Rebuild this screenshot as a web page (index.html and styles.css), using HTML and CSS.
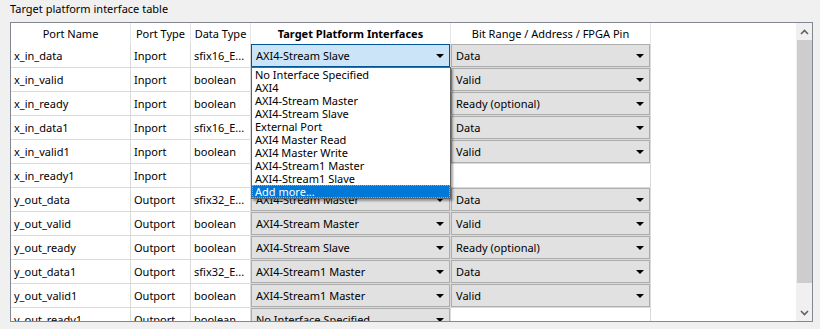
FILE: index.html
```html
<!DOCTYPE html>
<html lang="en">
<head>
    <meta charset="UTF-8">
    <title>Target platform interface table</title>
    <link rel="stylesheet" href="styles.css">
</head>
<body>
    <div class="panel">
        <div class="title">Target platform interface table</div>

        <div class="table-box">
            <div class="grid">
                <!-- Header -->
                <div class="row header">
                    <div class="cell">Port Name</div>
                    <div class="cell">Port Type</div>
                    <div class="cell">Data Type</div>
                    <div class="cell bold">Target Platform Interfaces</div>
                    <div class="cell">Bit Range / Address / FPGA Pin</div>
                    <div class="cell blank"></div>
                </div>

                <div class="row">
                    <div class="cell">x_in_data</div>
                    <div class="cell">Inport</div>
                    <div class="cell">sfix16_E...</div>
                    <div class="cell combo-cell open">
                        <div class="combo focused">AXI4-Stream Slave</div>
                        <ul class="dropdown">
                            <li>No Interface Specified</li>
                            <li>AXI4</li>
                            <li>AXI4-Stream Master</li>
                            <li>AXI4-Stream Slave</li>
                            <li>External Port</li>
                            <li>AXI4 Master Read</li>
                            <li>AXI4 Master Write</li>
                            <li>AXI4-Stream1 Master</li>
                            <li>AXI4-Stream1 Slave</li>
                            <li class="selected">Add more...</li>
                        </ul>
                    </div>
                    <div class="cell combo-cell"><div class="combo">Data</div></div>
                    <div class="cell blank"></div>
                </div>

                <!-- rows under the open list: their interface combos are hidden -->
                <div class="row">
                    <div class="cell">x_in_valid</div>
                    <div class="cell">Inport</div>
                    <div class="cell">boolean</div>
                    <div class="cell combo-cell"><div class="combo"></div></div>
                    <div class="cell combo-cell"><div class="combo">Valid</div></div>
                    <div class="cell blank"></div>
                </div>

                <div class="row">
                    <div class="cell">x_in_ready</div>
                    <div class="cell">Inport</div>
                    <div class="cell">boolean</div>
                    <div class="cell combo-cell"><div class="combo"></div></div>
                    <div class="cell combo-cell"><div class="combo">Ready (optional)</div></div>
                    <div class="cell blank"></div>
                </div>

                <div class="row">
                    <div class="cell">x_in_data1</div>
                    <div class="cell">Inport</div>
                    <div class="cell">sfix16_E...</div>
                    <div class="cell combo-cell"><div class="combo"></div></div>
                    <div class="cell combo-cell"><div class="combo">Data</div></div>
                    <div class="cell blank"></div>
                </div>

                <div class="row">
                    <div class="cell">x_in_valid1</div>
                    <div class="cell">Inport</div>
                    <div class="cell">boolean</div>
                    <div class="cell combo-cell"><div class="combo"></div></div>
                    <div class="cell combo-cell"><div class="combo">Valid</div></div>
                    <div class="cell blank"></div>
                </div>

                <div class="row">
                    <div class="cell">x_in_ready1</div>
                    <div class="cell">Inport</div>
                    <div class="cell"></div>
                    <div class="cell combo-cell"><div class="combo"></div></div>
                    <div class="cell"></div>
                    <div class="cell blank"></div>
                </div>

                <div class="row">
                    <div class="cell">y_out_data</div>
                    <div class="cell">Outport</div>
                    <div class="cell">sfix32_E...</div>
                    <div class="cell combo-cell"><div class="combo">AXI4-Stream Master</div></div>
                    <div class="cell combo-cell"><div class="combo">Data</div></div>
                    <div class="cell blank"></div>
                </div>

                <div class="row">
                    <div class="cell">y_out_valid</div>
                    <div class="cell">Outport</div>
                    <div class="cell">boolean</div>
                    <div class="cell combo-cell"><div class="combo">AXI4-Stream Master</div></div>
                    <div class="cell combo-cell"><div class="combo">Valid</div></div>
                    <div class="cell blank"></div>
                </div>

                <div class="row">
                    <div class="cell">y_out_ready</div>
                    <div class="cell">Outport</div>
                    <div class="cell">boolean</div>
                    <div class="cell combo-cell"><div class="combo">AXI4-Stream Slave</div></div>
                    <div class="cell combo-cell"><div class="combo">Ready (optional)</div></div>
                    <div class="cell blank"></div>
                </div>

                <div class="row">
                    <div class="cell">y_out_data1</div>
                    <div class="cell">Outport</div>
                    <div class="cell">sfix32_E...</div>
                    <div class="cell combo-cell"><div class="combo">AXI4-Stream1 Master</div></div>
                    <div class="cell combo-cell"><div class="combo">Data</div></div>
                    <div class="cell blank"></div>
                </div>

                <div class="row">
                    <div class="cell">y_out_valid1</div>
                    <div class="cell">Outport</div>
                    <div class="cell">boolean</div>
                    <div class="cell combo-cell"><div class="combo">AXI4-Stream1 Master</div></div>
                    <div class="cell combo-cell"><div class="combo">Valid</div></div>
                    <div class="cell blank"></div>
                </div>

                <div class="row">
                    <div class="cell">y_out_ready1</div>
                    <div class="cell">Outport</div>
                    <div class="cell">boolean</div>
                    <div class="cell combo-cell"><div class="combo">No Interface Specified</div></div>
                    <div class="cell"></div>
                    <div class="cell blank"></div>
                </div>
            </div>

            <!-- Vertical scrollbar -->
            <div class="scrollbar">
                <div class="scroll-btn">
                    <svg width="9" height="6" viewBox="0 0 9 6"><polyline points="1,5 4.5,1.5 8,5" fill="none" stroke="#606060" stroke-width="1.6"/></svg>
                </div>
                <div class="scroll-track">
                    <div class="scroll-thumb"></div>
                </div>
                <div class="scroll-btn">
                    <svg width="9" height="6" viewBox="0 0 9 6"><polyline points="1,1 4.5,4.5 8,1" fill="none" stroke="#606060" stroke-width="1.6"/></svg>
                </div>
            </div>
        </div>
    </div>
</body>
</html>
```

FILE: styles.css
```css
body {
    margin: 0;
    background-color: #f0f0f0;
    font-family: "Noto Sans", "Open Sans", sans-serif;
    font-size: 11px;
    color: #000;
}

.panel {
    padding: 1px 7px 0 10px;
}

.title {
    height: 16px;
    line-height: 16px;
    margin-bottom: 5px;
}

.table-box {
    display: flex;
    height: 300px;
    box-sizing: border-box;
    border: 1px solid #828790;
    background-color: #fff;
}

.grid {
    flex: 1;
    overflow: hidden;
}

.row {
    display: grid;
    grid-template-columns: 120px 60px 60px 200px 200px 1fr;
    height: 24px;
}

.cell {
    box-sizing: border-box;
    border-right: 1px solid #dadada;
    border-bottom: 1px solid #dadada;
    padding-left: 3px;
    line-height: 23px;
    white-space: nowrap;
    overflow: hidden;
}

.cell.blank {
    border: none;
}

.header {
    height: 21px;
}

.header .cell {
    text-align: center;
    line-height: 21px;
    padding-left: 0;
    border-bottom: none;
    border-right-color: #e5e5e5;
}

.header .bold {
    font-weight: bold;
}

.combo-cell {
    padding: 0;
    overflow: visible;
    position: relative;
}

.combo {
    display: flex;
    justify-content: space-between;
    align-items: center;
    height: 23px;
    box-sizing: border-box;
    padding-left: 4px;
    background-color: #e1e1e1;
    border: 1px solid #adadad;
    line-height: 21px;
}

.combo::after {
    content: "";
    margin-left: auto;
    margin-right: 5px;
    border-top: 4px solid #000;
    border-left: 4px solid transparent;
    border-right: 4px solid transparent;
}

.combo.focused {
    background-color: #cce4f7;
    border-color: #005499;
}

.open {
    z-index: 2;
}

.dropdown {
    position: absolute;
    top: 23px;
    left: 0;
    width: 200px;
    box-sizing: border-box;
    margin: 0;
    padding: 0;
    list-style: none;
    background-color: #fff;
    border: 1px solid #646464;
    box-shadow: 2px 2px 2px rgba(0, 0, 0, 0.35);
}

.dropdown li {
    height: 13px;
    line-height: 13px;
    padding-left: 3px;
}

.dropdown li.selected {
    background-color: #0078d7;
    color: #fff;
    outline: 1px dotted #e89a3c;
    outline-offset: -1px;
}

.scrollbar {
    width: 16px;
    display: flex;
    flex-direction: column;
    background-color: #f0f0f0;
}

.scroll-btn {
    height: 17px;
    display: flex;
    align-items: center;
    justify-content: center;
}

.scroll-track {
    flex: 1;
}

.scroll-thumb {
    height: 243px;
    margin: 0 0 0 1px;
    background-color: #cdcdcd;
}
```
